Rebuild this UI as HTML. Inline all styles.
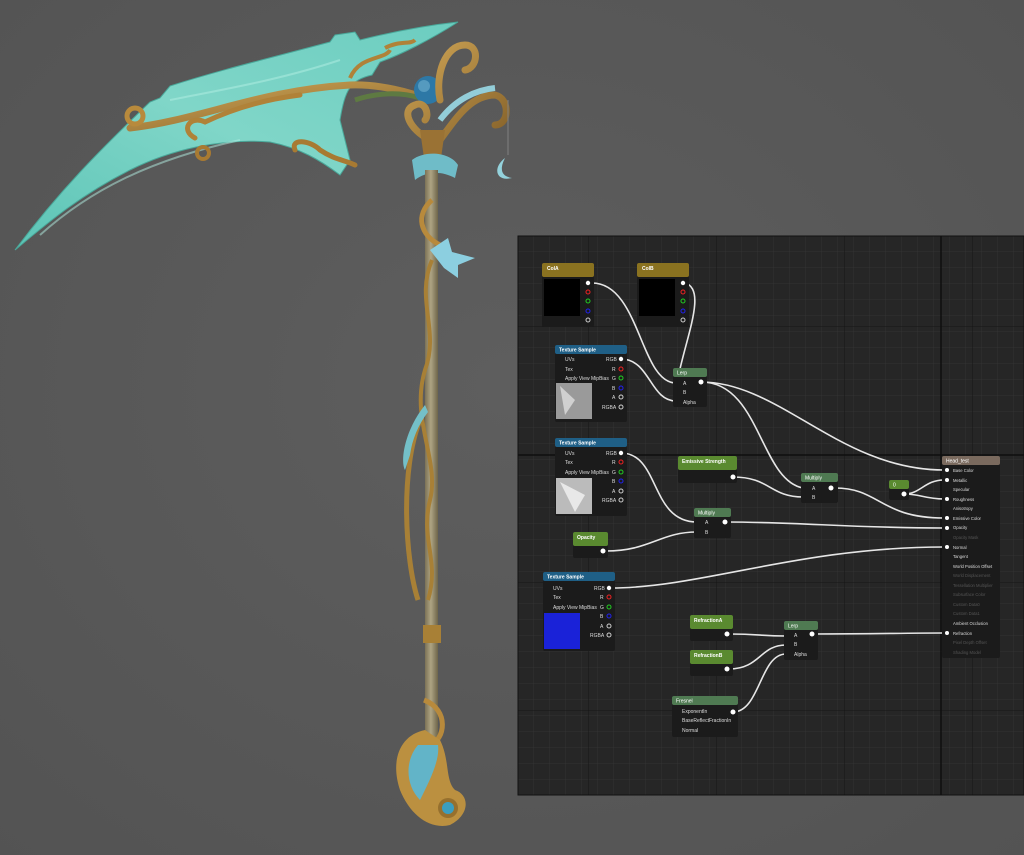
<!DOCTYPE html>
<html><head><meta charset="utf-8">
<style>
html,body{margin:0;padding:0;width:1024px;height:855px;overflow:hidden;background:#5a5a5a;font-family:"Liberation Sans",sans-serif}
svg{position:absolute;left:0;top:0}
</style></head><body>
<svg width="1024" height="855" viewBox="0 0 1024 855" xmlns="http://www.w3.org/2000/svg">
<defs>
<radialGradient id="bg" cx="0.5" cy="0.45" r="0.75"><stop offset="0" stop-color="#5e5e5e"/><stop offset="1" stop-color="#535353"/></radialGradient>
<linearGradient id="blade" x1="0" y1="1" x2="1" y2="0"><stop offset="0" stop-color="#5cc4b6"/><stop offset="0.5" stop-color="#80d6c8"/><stop offset="1" stop-color="#6ccdc0"/></linearGradient>
<linearGradient id="gold" x1="0" y1="0" x2="1" y2="1"><stop offset="0" stop-color="#d0a656"/><stop offset="1" stop-color="#86622a"/></linearGradient>
<linearGradient id="staff" x1="0" y1="0" x2="1" y2="0"><stop offset="0" stop-color="#7c7256"/><stop offset="0.45" stop-color="#aea483"/><stop offset="1" stop-color="#6e654a"/></linearGradient>
<pattern id="grid" width="16" height="16" patternUnits="userSpaceOnUse" x="518" y="236"><path d="M16 0V16H0" fill="none" stroke="#333" stroke-width="1"/></pattern>
<pattern id="grid2" width="128" height="128" patternUnits="userSpaceOnUse" x="589" y="327"><path d="M128 0V128H0" fill="none" stroke="#151515" stroke-width="1"/></pattern>
</defs>
<rect width="1024" height="855" fill="url(#bg)"/>

<!-- Scythe blade -->
<path d="M15,250 C60,190 100,150 150,102 L160,98 170,86 C220,70 270,58 330,42 L335,35 355,32 360,40 C400,30 430,25 458,22 C430,40 400,55 380,62 L372,75 C350,80 345,90 340,120 L350,160 340,175 C320,160 300,148 270,142 C220,138 170,150 130,170 C80,195 45,225 15,250 Z" fill="url(#blade)" stroke="#4aa89a" stroke-width="1"/>
<path d="M40,235 C90,190 150,160 240,140 M170,100 C220,90 280,80 340,60" fill="none" stroke="#b4efe4" stroke-width="2" opacity="0.5"/>
<!-- gold vine on blade -->
<path d="M130,128 C200,120 260,90 350,85 C380,84 410,92 430,100" fill="none" stroke="url(#gold)" stroke-width="7" stroke-linecap="round"/>
<path d="M195,138 C180,130 190,115 205,122 C230,110 260,100 300,95" fill="none" stroke="#b08238" stroke-width="5" stroke-linecap="round"/>
<circle cx="135" cy="116" r="8" fill="none" stroke="#b88a3c" stroke-width="5"/>
<circle cx="203" cy="153" r="6" fill="none" stroke="#a87a32" stroke-width="4"/>
<path d="M295,150 C290,138 310,140 320,150 C335,160 345,160 355,165" fill="none" stroke="#a87a32" stroke-width="5" stroke-linecap="round"/>
<path d="M350,78 C360,55 385,60 390,50 M385,48 C400,40 410,45 415,40" fill="none" stroke="#b08238" stroke-width="4"/>
<path d="M355,100 C370,95 395,90 420,98" fill="none" stroke="#5e7a42" stroke-width="5"/>
<!-- head ornament -->
<circle cx="428" cy="90" r="14" fill="#2d78a6"/>
<circle cx="424" cy="86" r="6" fill="#6fb0d0" opacity="0.6"/>
<path d="M440,100 C435,75 445,45 465,45 C480,45 478,68 465,70 M430,140 C410,130 400,110 415,105 C425,100 430,115 425,120 M440,140 C455,120 470,95 495,95 C510,98 510,125 495,125" fill="none" stroke="url(#gold)" stroke-width="7" stroke-linecap="round"/>
<path d="M440,120 C455,100 475,90 495,88" fill="none" stroke="#93cdd8" stroke-width="6"/>
<path d="M420,130 L445,130 440,165 425,165 Z" fill="#9a7234"/>
<path d="M412,160 C425,150 450,152 458,165 L455,178 C440,170 425,172 415,180 Z" fill="#6fbcc8"/>
<line x1="508" y1="100" x2="508" y2="155" stroke="#808080" stroke-width="1"/>
<path d="M505,158 C492,168 496,182 512,178 C500,176 500,168 505,158 Z" fill="#94d2dc"/>
<!-- staff -->
<rect x="425" y="170" width="13" height="625" fill="url(#staff)"/>
<path d="M432,200 C415,215 420,235 440,245" fill="none" stroke="#b88a3c" stroke-width="5"/>
<path d="M432,260 C415,300 440,330 425,370 C410,420 440,460 430,500 C420,540 440,560 428,600" fill="none" stroke="#a88036" stroke-width="4"/>
<path d="M420,420 C400,470 405,560 418,600" fill="none" stroke="#a88036" stroke-width="5"/>
<path d="M425,405 C405,430 400,460 405,470 L410,455 C412,440 418,425 428,412Z" fill="#74c0c8"/>
<path d="M430,250 L448,238 452,252 475,258 458,265 458,278 444,268 Z" fill="#8ccfe0"/>
<rect x="423" y="625" width="18" height="18" fill="#a88036"/>
<path d="M424,700 C450,710 445,740 430,745" fill="none" stroke="#b88a3c" stroke-width="5"/>
<!-- bottom ornament -->
<path d="M425,730 C400,735 390,760 400,790 C410,815 430,830 450,825 C470,815 470,795 455,790 C445,780 450,760 440,740 Z" fill="#bb9040"/>
<path d="M418,745 C405,760 405,785 420,800 C430,780 440,760 438,745 Z" fill="#62b4c8"/>
<circle cx="448" cy="808" r="10" fill="#96702e"/>
<circle cx="448" cy="808" r="6" fill="#3a9ec0"/>

<!-- Graph panel -->
<rect x="518" y="236" width="506" height="559" fill="#262626"/>
<rect x="518" y="236" width="506" height="559" fill="url(#grid)"/>
<rect x="518" y="236" width="506" height="559" fill="url(#grid2)"/>
<line x1="518" y1="455" x2="1024" y2="455" stroke="#0e0e0e" stroke-width="1.5"/>
<line x1="941" y1="236" x2="941" y2="795" stroke="#0e0e0e" stroke-width="1.5"/>
<rect x="518" y="236" width="506" height="559" fill="none" stroke="#111" stroke-width="1"/>

<!-- wires -->
<g fill="none" stroke="#e6e6e6" stroke-width="1.6">
<path d="M592,283 C640,283 640,383 676,383"/>
<path d="M685,283 C710,290 680,350 676,392"/>
<path d="M621,359 C650,359 650,401 676,401"/>
<path d="M701,382 C780,382 840,470 944,470"/>
<path d="M701,382 C760,382 760,480 803,488"/>
<path d="M621,453 C660,453 650,522 697,522"/>
<path d="M733,477 C770,477 770,497 803,497"/>
<path d="M835,488 C880,488 880,518 944,518"/>
<path d="M606,551 C650,551 660,532 697,532"/>
<path d="M725,522 C800,522 850,528 944,528"/>
<path d="M905,494 C920,494 925,480 944,480"/>
<path d="M905,494 C920,494 925,499 944,499"/>
<path d="M611,588 C700,588 800,547 944,547"/>
<path d="M729,634 C760,634 760,636 786,636"/>
<path d="M729,669 C760,669 760,645 786,645"/>
<path d="M733,712 C760,712 760,654 786,654"/>
<path d="M812,634 C880,634 900,633 944,633"/>
</g>

<g font-size="5" fill="#ddd">
<rect x="542" y="263" width="52" height="64" rx="2" fill="#1b1b1b"/>
<rect x="542" y="263" width="52" height="14" rx="2" fill="#8a7220"/>
<text x="547" y="270" font-size="5" font-weight="bold" fill="#fff">ColA</text>
<rect x="544" y="279" width="36" height="37" fill="#000"/>
<circle cx="588" cy="283" r="2.2" fill="#fff"/><circle cx="588" cy="292" r="2" fill="none" stroke="#e22"/><circle cx="588" cy="301" r="2" fill="none" stroke="#2c2"/><circle cx="588" cy="311" r="2" fill="none" stroke="#22e"/><circle cx="588" cy="320" r="2" fill="none" stroke="#ccc"/>
<rect x="637" y="263" width="52" height="64" rx="2" fill="#1b1b1b"/>
<rect x="637" y="263" width="52" height="14" rx="2" fill="#8a7220"/>
<text x="642" y="270" font-size="5" font-weight="bold" fill="#fff">ColB</text>
<rect x="639" y="279" width="36" height="37" fill="#000"/>
<circle cx="683" cy="283" r="2.2" fill="#fff"/><circle cx="683" cy="292" r="2" fill="none" stroke="#e22"/><circle cx="683" cy="301" r="2" fill="none" stroke="#2c2"/><circle cx="683" cy="311" r="2" fill="none" stroke="#22e"/><circle cx="683" cy="320" r="2" fill="none" stroke="#ccc"/>

<rect x="555" y="345" width="72" height="77" rx="2" fill="#1b1b1b"/>
<rect x="555" y="345" width="72" height="9" rx="2" fill="#1f5f86"/>
<text x="559" y="351.5" font-weight="bold" fill="#fff">Texture Sample</text>
<text x="565" y="361">UVs</text><text x="565" y="371">Tex</text><text x="565" y="380">Apply View MipBias</text>
<text x="606" y="361">RGB</text><text x="612" y="371">R</text><text x="612" y="380">G</text><text x="612" y="390">B</text><text x="612" y="399">A</text><text x="602" y="409">RGBA</text>
<circle cx="621" cy="359" r="2.2" fill="#fff"/><circle cx="621" cy="369" r="2" fill="none" stroke="#e22"/><circle cx="621" cy="378" r="2" fill="none" stroke="#2c2"/><circle cx="621" cy="388" r="2" fill="none" stroke="#22e"/><circle cx="621" cy="397" r="2" fill="none" stroke="#ccc"/><circle cx="621" cy="407" r="2" fill="none" stroke="#ccc"/>
<rect x="556" y="383" width="36" height="36" fill="#9a9a9a"/><path d="M560,386 L575,400 565,415 Z" fill="#d0d0d0"/>

<rect x="673" y="368" width="34" height="39" rx="2" fill="#1b1b1b"/>
<rect x="673" y="368" width="34" height="9" rx="2" fill="#4f7a52"/>
<text x="677" y="374.5" fill="#fff">Lerp</text>
<text x="683" y="385">A</text><text x="683" y="394">B</text><text x="683" y="404">Alpha</text>
<circle cx="701" cy="382" r="2.5" fill="#fff"/>

<rect x="555" y="438" width="72" height="78" rx="2" fill="#1b1b1b"/>
<rect x="555" y="438" width="72" height="9" rx="2" fill="#1f5f86"/>
<text x="559" y="444.5" font-weight="bold" fill="#fff">Texture Sample</text>
<text x="565" y="455">UVs</text><text x="565" y="464">Tex</text><text x="565" y="474">Apply View MipBias</text>
<text x="606" y="455">RGB</text><text x="612" y="464">R</text><text x="612" y="474">G</text><text x="612" y="483">B</text><text x="612" y="493">A</text><text x="602" y="502">RGBA</text>
<circle cx="621" cy="453" r="2.2" fill="#fff"/><circle cx="621" cy="462" r="2" fill="none" stroke="#e22"/><circle cx="621" cy="472" r="2" fill="none" stroke="#2c2"/><circle cx="621" cy="481" r="2" fill="none" stroke="#22e"/><circle cx="621" cy="491" r="2" fill="none" stroke="#ccc"/><circle cx="621" cy="500" r="2" fill="none" stroke="#ccc"/>
<rect x="556" y="478" width="36" height="36" fill="#bbb"/><path d="M560,482 L585,495 575,512 Z" fill="#e8e8e8"/>

<rect x="678" y="456" width="59" height="27" rx="2" fill="#1b1b1b"/>
<rect x="678" y="456" width="59" height="14" rx="2" fill="#5a8a30"/>
<text x="682" y="463" font-weight="bold" fill="#fff">Emissive Strength</text>
<circle cx="733" cy="477" r="2.5" fill="#fff"/>

<rect x="801" y="473" width="37" height="30" rx="2" fill="#1b1b1b"/>
<rect x="801" y="473" width="37" height="9" rx="2" fill="#4f7a52"/>
<text x="805" y="479.5" fill="#fff">Multiply</text>
<text x="812" y="490">A</text><text x="812" y="499">B</text>
<circle cx="831" cy="488" r="2.5" fill="#fff"/>

<rect x="694" y="508" width="37" height="30" rx="2" fill="#1b1b1b"/>
<rect x="694" y="508" width="37" height="9" rx="2" fill="#4f7a52"/>
<text x="698" y="514.5" fill="#fff">Multiply</text>
<text x="705" y="524">A</text><text x="705" y="534">B</text>
<circle cx="725" cy="522" r="2.5" fill="#fff"/>

<rect x="889" y="480" width="20" height="20" rx="2" fill="#1b1b1b"/>
<rect x="889" y="480" width="20" height="9" rx="2" fill="#5a8a30"/>
<text x="893" y="486.5" fill="#fff">0</text>
<circle cx="904" cy="494" r="2.5" fill="#fff"/>

<rect x="573" y="532" width="35" height="26" rx="2" fill="#1b1b1b"/>
<rect x="573" y="532" width="35" height="14" rx="2" fill="#5a8a30"/>
<text x="577" y="539" font-weight="bold" fill="#fff">Opacity</text>
<circle cx="603" cy="551" r="2.5" fill="#fff"/>

<rect x="543" y="572" width="72" height="79" rx="2" fill="#1b1b1b"/>
<rect x="543" y="572" width="72" height="9" rx="2" fill="#1f5f86"/>
<text x="547" y="578.5" font-weight="bold" fill="#fff">Texture Sample</text>
<text x="553" y="590">UVs</text><text x="553" y="599">Tex</text><text x="553" y="609">Apply View MipBias</text>
<text x="594" y="590">RGB</text><text x="600" y="599">R</text><text x="600" y="609">G</text><text x="600" y="618">B</text><text x="600" y="628">A</text><text x="590" y="637">RGBA</text>
<circle cx="609" cy="588" r="2.2" fill="#fff"/><circle cx="609" cy="597" r="2" fill="none" stroke="#e22"/><circle cx="609" cy="607" r="2" fill="none" stroke="#2c2"/><circle cx="609" cy="616" r="2" fill="none" stroke="#22e"/><circle cx="609" cy="626" r="2" fill="none" stroke="#ccc"/><circle cx="609" cy="635" r="2" fill="none" stroke="#ccc"/>
<rect x="544" y="613" width="36" height="36" fill="#1a22d8"/>

<rect x="690" y="615" width="43" height="26" rx="2" fill="#1b1b1b"/>
<rect x="690" y="615" width="43" height="14" rx="2" fill="#5a8a30"/>
<text x="694" y="622" font-weight="bold" fill="#fff">RefractionA</text>
<circle cx="727" cy="634" r="2.5" fill="#fff"/>
<rect x="690" y="650" width="43" height="26" rx="2" fill="#1b1b1b"/>
<rect x="690" y="650" width="43" height="14" rx="2" fill="#5a8a30"/>
<text x="694" y="657" font-weight="bold" fill="#fff">RefractionB</text>
<circle cx="727" cy="669" r="2.5" fill="#fff"/>

<rect x="784" y="621" width="34" height="39" rx="2" fill="#1b1b1b"/>
<rect x="784" y="621" width="34" height="9" rx="2" fill="#4f7a52"/>
<text x="788" y="627.5" fill="#fff">Lerp</text>
<text x="794" y="637">A</text><text x="794" y="646">B</text><text x="794" y="656">Alpha</text>
<circle cx="812" cy="634" r="2.5" fill="#fff"/>

<rect x="672" y="696" width="66" height="41" rx="2" fill="#1b1b1b"/>
<rect x="672" y="696" width="66" height="9" rx="2" fill="#4f7a52"/>
<text x="676" y="702.5" fill="#fff">Fresnel</text>
<text x="682" y="713">ExponentIn</text><text x="682" y="722">BaseReflectFractionIn</text><text x="682" y="732">Normal</text>
<circle cx="733" cy="712" r="2.5" fill="#fff"/>

<rect x="942" y="456" width="58" height="202" rx="2" fill="#1b1b1b"/>
<rect x="942" y="456" width="58" height="9" rx="2" fill="#7a6a5e"/>
<text x="946" y="462.5" fill="#fff">Head_test</text>
<g font-size="4.2">
<text x="953" y="472">Base Color</text><text x="953" y="482">Metallic</text><text x="953" y="491">Specular</text><text x="953" y="501">Roughness</text><text x="953" y="510">Anisotropy</text><text x="953" y="520">Emissive Color</text><text x="953" y="529">Opacity</text>
<text x="953" y="539" fill="#555">Opacity Mask</text>
<text x="953" y="549">Normal</text><text x="953" y="558">Tangent</text><text x="953" y="568">World Position Offset</text>
<text x="953" y="577" fill="#555">World Displacement</text><text x="953" y="587" fill="#555">Tessellation Multiplier</text><text x="953" y="596" fill="#555">Subsurface Color</text><text x="953" y="606" fill="#555">Custom Data0</text><text x="953" y="615" fill="#555">Custom Data1</text>
<text x="953" y="625">Ambient Occlusion</text><text x="953" y="635">Refraction</text>
<text x="953" y="644" fill="#555">Pixel Depth Offset</text><text x="953" y="654" fill="#555">Shading Model</text>
</g>
<g fill="#fff"><circle cx="947" cy="470" r="2"/><circle cx="947" cy="480" r="2"/><circle cx="947" cy="499" r="2"/><circle cx="947" cy="518" r="2"/><circle cx="947" cy="528" r="2"/><circle cx="947" cy="547" r="2"/><circle cx="947" cy="633" r="2"/></g>
</g>
</svg>
</body></html>
